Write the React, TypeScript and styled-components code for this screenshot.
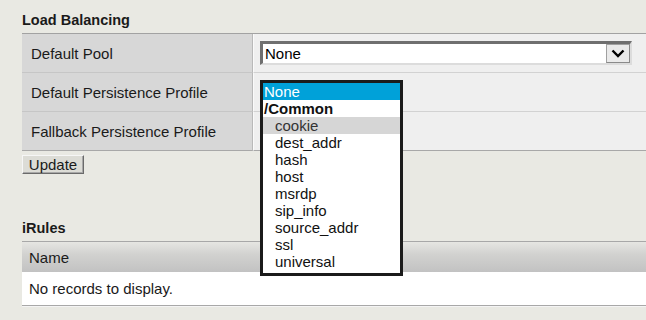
import React from "react";
import styled, { createGlobalStyle } from "styled-components";

const GlobalStyle = createGlobalStyle`
  html, body {
    margin: 0;
    padding: 0;
    background: #e9e9e3;
    overflow: hidden;
  }
  body {
    font-family: "Liberation Sans", Arial, sans-serif;
    color: #000;
  }
`;

const Page = styled.div`
  width: 646px;
  height: 320px;
  overflow: hidden;
  padding-left: 22px;
  box-sizing: border-box;
`;

const SectionTitle = styled.div<{ $top: number }>`
  margin-top: ${(p) => p.$top}px;
  font-size: 14.5px;
  font-weight: bold;
  line-height: 17px;
  height: 17px;
  color: #1a1a1a;
`;

const PropTable = styled.div`
  margin-top: 4px;
  width: 660px;
  border-top: 1px solid #a2a2a2;
  display: grid;
  grid-template-columns: 231px 1fr;
`;

const LabelCell = styled.div<{ $last?: boolean }>`
  height: 38px;
  background: #d7d7d7;
  border-right: 1px solid #b9b9b9;
  border-bottom: 1px solid ${(p) => (p.$last ? "#a8a8a8" : "#c6c6c6")};
  display: flex;
  align-items: center;
  padding-left: 9px;
  font-size: 15px;
  color: #1a1a1a;
`;

const ValueCell = styled.div<{ $last?: boolean }>`
  height: 38px;
  background: #efefef;
  border-bottom: 1px solid ${(p) => (p.$last ? "#a8a8a8" : "#d2d2d2")};
  border-left: 1px solid #fafafa;
  position: relative;
  padding-left: 6px;
`;

const SelectWrap = styled.div`
  position: relative;
  margin-top: 7px;
  width: 372px;
`;

const SelectBox = styled.div`
  box-sizing: border-box;
  height: 24px;
  width: 372px;
  background: #fff;
  border-top: 3px solid #6f6f6f;
  border-left: 3px solid #6f6f6f;
  border-right: 2px solid #dcdcdc;
  border-bottom: 2px solid #dcdcdc;
  display: flex;
  align-items: center;
  justify-content: space-between;
  font-size: 15px;
  padding-left: 2px;
`;

const ArrowButton = styled.div`
  box-sizing: border-box;
  width: 24px;
  height: 19px;
  background: #eaeaea;
  border: 1px solid #8a8a8a;
  border-top-color: #a0a0a0;
  border-left-color: #a0a0a0;
  display: flex;
  align-items: center;
  justify-content: center;
`;

const DropList = styled.div`
  position: absolute;
  left: 0;
  top: 39px;
  width: 143px;
  box-sizing: border-box;
  border: 3px solid #1b1b1b;
  background: #fff;
  padding-bottom: 3px;
  z-index: 10;
`;

const DropItem = styled.div<{ $variant?: "selected" | "hover" | "group"; $indent?: boolean }>`
  height: 17px;
  line-height: 17px;
  font-size: 15px;
  padding-left: ${(p) => (p.$indent ? 12 : 1)}px;
  white-space: nowrap;
  font-weight: ${(p) => (p.$variant === "group" ? "bold" : "normal")};
  background: ${(p) =>
    p.$variant === "selected" ? "#00a1d9" : p.$variant === "hover" ? "#d6d6d6" : "#fff"};
  color: ${(p) => (p.$variant === "selected" ? "#fff" : p.$variant === "hover" ? "#333" : "#111")};
`;

const UpdateButton = styled.button`
  margin-top: 4px;
  display: block;
  width: 62px;
  height: 19px;
  padding: 0;
  background: #dcdcd6;
  border: 1px solid;
  border-color: #f6f6f6 #6a6a6a #6a6a6a #f6f6f6;
  box-shadow: inset -1px -1px 0 #a8a8a8;
  font-family: "Liberation Sans", Arial, sans-serif;
  font-size: 15px;
  line-height: 15px;
  color: #1a1a1a;
`;

const ListTable = styled.div`
  margin-top: 4px;
  width: 660px;
`;

const ListHeader = styled.div`
  height: 30px;
  border-top: 1px solid #a8a8a8;
  background: linear-gradient(#e6e6e2, #d2d2d0 40%, #c2c2c2);
  display: flex;
  align-items: center;
  padding-left: 7px;
  font-size: 15px;
  color: #1a1a1a;
`;

const ListRow = styled.div`
  height: 33px;
  background: #fff;
  border-bottom: 1px solid #a8a8a8;
  box-shadow: 0 1px 0 #f4f4f4;
  display: flex;
  align-items: center;
  padding-left: 7px;
  font-size: 15px;
  color: #1a1a1a;
`;

const profiles = [
  "cookie",
  "dest_addr",
  "hash",
  "host",
  "msrdp",
  "sip_info",
  "source_addr",
  "ssl",
  "universal",
];

export default function App() {
  return (
    <Page>
      <GlobalStyle />
      <SectionTitle $top={12}>Load Balancing</SectionTitle>
      <PropTable>
        <LabelCell>Default Pool</LabelCell>
        <ValueCell>
          <SelectWrap>
            <SelectBox>
              <span>None</span>
              <ArrowButton>
                <svg width="14" height="9" viewBox="0 0 14 9">
                  <polyline points="1.5,1.5 7,7 12.5,1.5" fill="none" stroke="#000" strokeWidth="2.4" />
                </svg>
              </ArrowButton>
            </SelectBox>
            <DropList>
              <DropItem $variant="selected">None</DropItem>
              <DropItem $variant="group">/Common</DropItem>
              {profiles.map((p, i) => (
                <DropItem key={p} $indent $variant={i === 0 ? "hover" : undefined}>
                  {p}
                </DropItem>
              ))}
            </DropList>
          </SelectWrap>
        </ValueCell>
        <LabelCell>Default Persistence Profile</LabelCell>
        <ValueCell />
        <LabelCell $last>Fallback Persistence Profile</LabelCell>
        <ValueCell $last />
      </PropTable>
      <UpdateButton>Update</UpdateButton>
      <SectionTitle $top={46}>iRules</SectionTitle>
      <ListTable>
        <ListHeader>Name</ListHeader>
        <ListRow>No records to display.</ListRow>
      </ListTable>
    </Page>
  );
}
